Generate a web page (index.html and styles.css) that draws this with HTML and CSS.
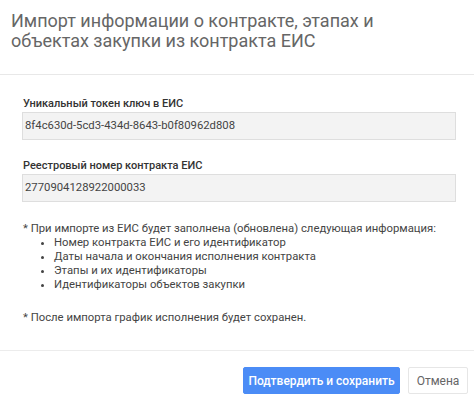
FILE: index.html
```html
<!DOCTYPE html>
<html lang="ru">
<head>
<meta charset="utf-8">
<link rel="stylesheet" href="styles.css">
</head>
<body>
<div class="dialog">
  <div class="header">
    <div class="title">Импорт информации о контракте, этапах и объектах закупки из контракта ЕИС</div>
  </div>
  <div class="content">
    <div class="field">
      <div class="label">Уникальный токен ключ в ЕИС</div>
      <div class="input">8f4c630d-5cd3-434d-8643-b0f80962d808</div>
    </div>
    <div class="field">
      <div class="label">Реестровый номер контракта ЕИС</div>
      <div class="input">2770904128922000033</div>
    </div>
    <div class="notes">
      <div class="note">* При импорте из ЕИС будет заполнена (обновлена) следующая информация:</div>
      <ul class="list">
        <li>Номер контракта ЕИС и его идентификатор</li>
        <li>Даты начала и окончания исполнения контракта</li>
        <li>Этапы и их идентификаторы</li>
        <li>Идентификаторы объектов закупки</li>
      </ul>
      <div class="note note-last">* После импорта график исполнения будет сохранен.</div>
    </div>
  </div>
  <div class="footer">
    <button class="btn btn-primary">Подтвердить и сохранить</button>
    <button class="btn btn-cancel">Отмена</button>
  </div>
</div>
</body>
</html>
```
FILE: styles.css
```css
html, body {
  margin: 0;
  padding: 0;
  background: #ffffff;
}
body {
  font-family: Roboto, "Liberation Sans", Arial, sans-serif;
  width: 474px;
  height: 404px;
  overflow: hidden;
}
.dialog {
  display: flex;
  flex-direction: column;
}
.header {
  padding: 11px 30px 23px 11px;
  border-bottom: 1px solid #e8e8e8;
}
.title {
  font-size: 18px;
  line-height: 20px;
  color: #666666;
}
.content {
  padding: 22px 18px 0 22px;
}
.field {
  margin-bottom: 19px;
}
.label {
  font-size: 11px;
  line-height: 13px;
  font-weight: 500;
  color: #333333;
  padding-left: 1px;
  margin-bottom: 2px;
}
.input {
  height: 26px;
  line-height: 26px;
  border: 1px solid #dedede;
  background: #f3f3f3;
  padding: 0 2px;
  font-size: 11.3px;
  color: #444444;
}
.notes {
  font-size: 11.3px;
  line-height: 14px;
  color: #444444;
  padding-top: 1px;
}
.note {
  padding-left: 1px;
}
.list {
  margin: 0;
  padding: 0 0 0 32px;
}
.note-last {
  margin-top: 19px;
}
.footer {
  margin-top: 25px;
  border-top: 1px solid #ececec;
  padding: 16px 6px 0 0;
  display: flex;
  justify-content: flex-end;
  gap: 8px;
}
.btn {
  font-family: Roboto, "Liberation Sans", Arial, sans-serif;
  font-size: 12px;
  height: 27px;
  border-radius: 2px;
  white-space: nowrap;
  cursor: pointer;
}
.btn-primary {
  background: #4b8cf6;
  color: #ffffff;
  border: 1px solid #4b8cf6;
  font-weight: 500;
  padding: 0;
  width: 157px;
}
.btn-cancel {
  background: #ffffff;
  color: #666666;
  border: 1px solid #e6e6e6;
  width: 60px;
  padding: 0;
}
```
